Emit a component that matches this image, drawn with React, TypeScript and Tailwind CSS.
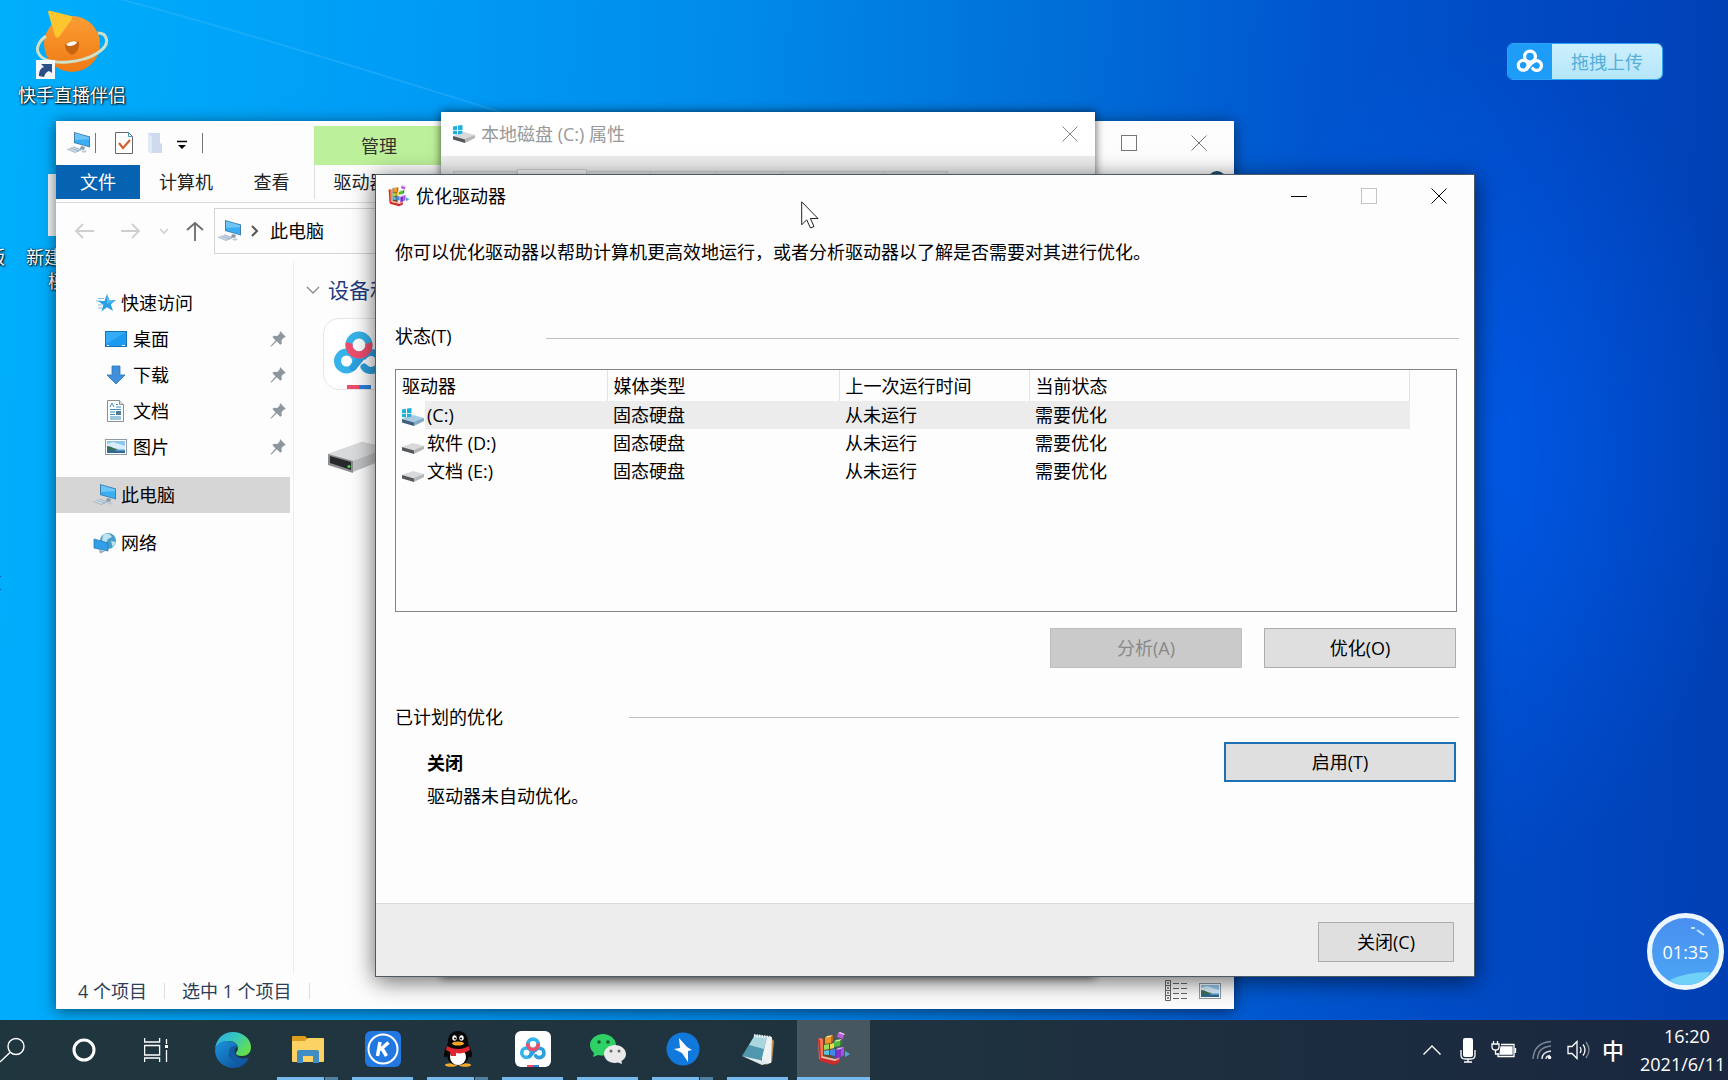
import React from "react";

type IconProps = { className?: string };

/* ---------- window and system icons ---------- */

const CloseGlyph = ({ className = "" }: IconProps) => (
  <svg viewBox="0 0 16 16" className={`size-4 ${className}`} fill="none" stroke="currentColor" strokeWidth="1">
    <path d="M.5.5l15 15M15.5.5l-15 15" />
  </svg>
);
const MaxGlyph = ({ className = "" }: IconProps) => (
  <svg viewBox="0 0 16 16" className={`size-4 ${className}`} fill="none" stroke="currentColor" strokeWidth="1">
    <rect x=".5" y=".5" width="15" height="15" />
  </svg>
);
const MinGlyph = () => (
  <svg viewBox="0 0 16 16" className="size-4" stroke="currentColor" strokeWidth="1">
    <path d="M0 8.5h16" />
  </svg>
);

const Computer = ({ className = "" }: IconProps) => (
  <svg viewBox="0 0 24 22" className={`h-[22px] w-6 shrink-0 ${className}`}>
    <path d="M7 0l16 4.500v11L7 11z" fill="#3f7fae" />
    <path d="M8 1.200l14 4v9.200L8 10.200z" fill="#39aef3" />
    <path d="M8 1.200l14 4v2L8 8z" fill="#6cc4f7" />
    <path d="M14 14l4 1-1 3-4-1z" fill="#8b9bab" />
    <path d="M0 17l7-2.500 8 3-7 3z" fill="#cfdbe6" />
    <path d="M0 17l8 3.500 7-3M3 16l9 3M6 14.800l8 3" stroke="#8fa6ba" strokeWidth=".7" fill="none" />
    <ellipse cx="17" cy="19.500" rx="2.500" ry="1" fill="#b9c6d2" />
  </svg>
);

const Drive = ({ className = "" }: IconProps) => (
  <svg viewBox="0 0 48 34" className={className}>
    <path d="M1 13L35 1l26 6v10L26 31z" fill="#bfc1c3" />
    <path d="M1 13L35 1l26 6-35 13z" fill="#d9dadb" />
    <path d="M1 13l25 7v12L1 24z" fill="#8b8e90" />
    <path d="M3 15l21 6v8L3 22z" fill="#27292b" />
    <circle cx="22" cy="25.500" r="1.600" fill="#4fd04f" />
  </svg>
);

const SmallDrive = ({ windows = false, tint = false }: { windows?: boolean; tint?: boolean }) => (
  <svg viewBox="0 0 22 20" className="h-5 w-[22px] shrink-0">
    <path d="M0 12l11-4 11 3-9 5z" fill={tint ? "#a9cbe2" : "#d8d9da"} />
    <path d="M22 11v3l-10 5v-4z" fill={tint ? "#7fa9c6" : "#b4b6b8"} />
    <path d="M0 12l12 3.500V19L0 15.500z" fill={tint ? "#3f617b" : "#55585a"} />
    {windows && (
      <g fill="#1fb0dc">
        <path d="M0 2.500l4-.7v4.400H0zM5 1.600L9.500 1v5.200H5zM0 7h4v3.600L0 10zM5 7h4.500v2.500L5 10.500z" />
      </g>
    )}
  </svg>
);

const Defrag = ({ className = "" }: IconProps) => (
  <svg viewBox="0 0 34 34" className={className}>
    <path d="M7 5l8-2v24l-8-1z" fill="#6b4a1e" />
    <path d="M1 7l2-1 3 1v17l-1 4-3-1z" fill="#f07a5a" />
    <path d="M1 7l2 1 1 18 14 3 5-3v4l-6 3L3 29z" fill="#cf2a2c" />
    <path d="M5 24l13 3 5-2-1 2-4 2L5 26z" fill="#f7b9a6" />
    <path d="M8 6l6-1v6l-6 1z" fill="#f0962c" />
    <path d="M8 6l2-2 6-1-2 2z" fill="#ffe08a" />
    <path d="M14 5l2-2v6l-2 2z" fill="#b96a12" />
    <path d="M7 13l5-1v5l-5 1z" fill="#9bdc58" />
    <path d="M13 12l4-1v5l-4 1z" fill="#f2d64a" />
    <path d="M17 10l6-1v5l-6 1z" fill="#55bb3e" />
    <path d="M17 10l2-2 6-1-2 2z" fill="#c6f296" />
    <path d="M23 9l2-2v5l-2 2z" fill="#2f8a2a" />
    <path d="M7 19l5-1v5l-5-.500z" fill="#56c4e6" />
    <path d="M13 18l5-1v7l-5-1z" fill="#3f8be8" />
    <path d="M19 18l5-1v8l-5 2z" fill="#7c34c8" />
    <path d="M19 18l2-2 6-1-3 2z" fill="#e0b6f8" />
    <path d="M24 17l3-2v8l-3 2z" fill="#a552dd" />
    <path d="M21 1l6 2-1 4-6-2z" fill="#b95ad6" />
    <path d="M21 1l2-1 5 2-1 1z" fill="#f2c8fa" />
    <path d="M28 19l5 3-3 2-2 1z" fill="#4aa6dd" />
  </svg>
);

const Baidu = ({ className = "", mono = false }: IconProps & { mono?: boolean }) => (
  <svg viewBox="0 0 50 46" className={className} fill="none" strokeWidth={mono ? 6 : 7}>
    <circle cx="12.500" cy="30" r="9" stroke={mono ? "#fff" : "#35b3ea"} />
    <path
      d="M19 36.500L31 22M30 36a9 9 0 1 0 0-11"
      stroke={mono ? "#fff" : "#2c9fdd"}
      strokeLinecap="round"
    />
    <circle cx="25" cy="14" r="10" stroke={mono ? "#fff" : "#35b3ea"} />
    {!mono && <path d="M15.200 12a10 10 0 1 0 19.600 0" stroke="#ee4d6c" />}
  </svg>
);

const Star = () => (
  <svg viewBox="0 0 22 20" className="h-5 w-[22px] shrink-0">
    <path d="M12 1l2.300 6H21l-5.200 4.200L18 18l-6-3.800L6.500 18.500 8.300 12 3 8h6.500z" fill="#2b9fe6" />
    <path d="M12 1l2.300 6H21l-9 4z" fill="#5bbcf2" />
    <path d="M3 5.500h6M1 8h5M3 12h4M3 15h4" stroke="#5aaee0" strokeWidth=".8" />
  </svg>
);
const Desktop = () => (
  <svg viewBox="0 0 22 18" className="h-[18px] w-[22px] shrink-0">
    <rect x=".5" y="1.500" width="21" height="15" fill="#1d9bf0" stroke="#1672b5" />
    <path d="M1 2h20L1 14z" fill="#36abf6" />
    <path d="M2 15.500h2M17 15.500h3" stroke="#fff" />
  </svg>
);
const Download = () => (
  <svg viewBox="0 0 22 20" className="h-5 w-[22px] shrink-0">
    <path d="M7 1h8v9h5l-9 9-9-9h5z" fill="#3f8fdc" stroke="#2e73b8" strokeWidth=".8" />
  </svg>
);
const Doc = () => (
  <svg viewBox="0 0 22 22" className="size-[22px] shrink-0">
    <path d="M2.500.5h12l4 4v17h-16z" fill="#fff" stroke="#8a8f94" />
    <path d="M14.500.5v4h4" fill="#dfe3e6" stroke="#8a8f94" />
    <path d="M5 7l2-4 2 4M11 4.500h2M11 7h5M5 9.500h11M5 12h5M5 14.500h5M5 17h11M5 19h11" stroke="#3b8fb8" fill="none" />
    <rect x="11" y="11" width="5" height="4" fill="#4e7f9c" />
  </svg>
);
const Picture = ({ className = "" }: IconProps) => (
  <svg viewBox="0 0 22 16" className={`h-4 w-[22px] shrink-0 ${className}`}>
    <rect x=".5" y=".5" width="21" height="15" fill="#fff" stroke="#8f9aa3" />
    <rect x="2" y="2" width="18" height="12" fill="#8cc6ee" />
    <path d="M2 5l6-2 12 4v3H2z" fill="#d9eefa" />
    <path d="M2 7c5 0 6 3 11 3l-3 2H2z" fill="#3e6f5c" />
    <path d="M2 11.500h18V14H2z" fill="#2f6a94" />
  </svg>
);
const Pin = () => (
  <svg viewBox="0 0 16 16" className="size-4" fill="#8d979f">
    <path d="M10 0l6 6-2 .500-2.500 2.500.3 3.500-1.500 1.300-3.600-3.600L1.500 15.500l-1-.500 5-5.400L2.400 6l1.500-1.300 3.400.3L9.700 2.500z" />
  </svg>
);
const Network = () => (
  <svg viewBox="0 0 24 22" className="h-[22px] w-6 shrink-0">
    <circle cx="15" cy="9" r="8" fill="#4a9fc8" />
    <path d="M10 3c4-3 7-1 9 2l-4 2-2 4-4-2zM18 9l5 1-3 6z" fill="#bfe2ef" />
    <path d="M1 7l14 4v8L1 16z" fill="#2f9fe9" stroke="#2878b4" strokeWidth=".8" />
    <path d="M6 18l6 1.500-5 2z" fill="#92a8ba" />
  </svg>
);

/* ---------- taskbar icons ---------- */

const Edge = () => (
  <svg viewBox="0 0 36 36" className="size-9">
    <defs>
      <linearGradient id="edge-top" x1="0" y1="0" x2="1" y2=".6">
        <stop offset="0" stopColor="#2fa9e0" />
        <stop offset=".5" stopColor="#35c6c0" />
        <stop offset="1" stopColor="#63e04e" />
      </linearGradient>
      <linearGradient id="edge-low" x1="0" y1="0" x2="1" y2="1">
        <stop offset="0" stopColor="#1b94dc" />
        <stop offset="1" stopColor="#0c4a94" />
      </linearGradient>
    </defs>
    <path d="M0 17C1 7 8 0 18 0c10 0 18 7 18 15 0 6-4 9-9 9-4 0-6-1-6-3 0-1 2-2 2-5 0-4-4-7-9-7C7 9 1 13 0 17z" fill="url(#edge-top)" />
    <path d="M0 18C1 12 6 9 12 9c7 0 11 3 11 7-3-3-9-1-9 5 0 6 6 10 12 9 3 0 5-1 7-2-3 5-8 8-14 8C8 36 0 28 0 18z" fill="url(#edge-low)" />
    <path d="M14 20c0-4 4-7 8-5-4 2-3 9 3 11 4 1 8 0 9-1-2 5-7 7-11 6-5-1-9-5-9-11z" fill="#135ca5" />
  </svg>
);
const Folder = () => (
  <svg viewBox="0 0 36 32" className="h-8 w-9">
    <path d="M2 4q0-1 1-1h12l3 3h15v6H2z" fill="#dc9e1c" />
    <path d="M2 8h13l3-3h15q1 0 1 1v22q0 1-1 1H3q-1 0-1-1z" fill="#fcd265" />
    <path d="M7 30V19q0-2 2-2h18q2 0 2 2v11h-6v-7H13v7z" fill="#3f8dc4" />
  </svg>
);
const KApp = () => (
  <svg viewBox="0 0 36 36" className="size-9">
    <rect width="36" height="36" rx="6" fill="#2377e0" />
    <circle cx="18" cy="18" r="14.500" fill="none" stroke="#fff" strokeWidth="2" />
    <path d="M15 11l-2.500 14M23.500 11.500L15 19M17 17.500l4.500 7.500" stroke="#fff" strokeWidth="3.500" fill="none" />
  </svg>
);
const QQ = () => (
  <svg viewBox="0 0 32 36" className="h-9 w-8">
    <ellipse cx="9" cy="34" rx="6" ry="1.800" fill="#f3a92a" />
    <ellipse cx="23" cy="34" rx="6" ry="1.800" fill="#f3a92a" />
    <path d="M16 0c7 0 10 5 10 11 0 3 4 8 4 13 0 3-2 3-3 1-1 6-5 9-11 9S6 31 5 25c-1 2-3 2-3-1 0-5 4-10 4-13C6 5 9 0 16 0z" fill="#070707" />
    <ellipse cx="16" cy="26" rx="8" ry="8" fill="#fff" />
    <ellipse cx="12.500" cy="7" rx="2.200" ry="2.800" fill="#fff" />
    <ellipse cx="19.500" cy="7" rx="2.200" ry="2.800" fill="#fff" />
    <circle cx="13" cy="7.500" r="1" />
    <circle cx="19" cy="7.500" r="1" />
    <ellipse cx="16" cy="12.500" rx="6" ry="2" fill="#f5a623" />
    <path d="M5 15c7 4 15 4 22 0l1 4c-5 3-10 4-14 3v3H9l-1-4-4-2z" fill="#e0262e" />
  </svg>
);
const WeChat = () => (
  <svg viewBox="0 0 36 32" className="h-8 w-9">
    <path d="M13 1C6 1 0 6 0 12c0 3 1.500 6 4 8l-1 4 5-2c9 2 18-2 18-10C26 6 20 1 13 1z" fill="#2fd165" />
    <ellipse cx="9" cy="9" rx="1.800" ry="1.800" fill="#155c2c" />
    <ellipse cx="18" cy="9" rx="1.800" ry="1.800" fill="#155c2c" />
    <path d="M25 12c-6 0-11 4-11 9s5 9 11 9l3-.500 4 1.500-.500-3c3-2 4.500-4 4.500-7 0-5-5-9-11-9z" fill="#e9e9e9" />
    <circle cx="21" cy="18" r="1.500" fill="#666" />
    <circle cx="29" cy="18" r="1.500" fill="#666" />
  </svg>
);
const Bolt = () => (
  <svg viewBox="0 0 34 34" className="size-[34px]">
    <circle cx="17" cy="17" r="16.500" fill="#1178dc" />
    <path d="M13 6l8 9 5 3-4 1v11l-6-9-8-4 6-1z" fill="#fff" />
  </svg>
);
const Notepad = () => (
  <svg viewBox="0 0 34 34" className="size-[34px]">
    <path d="M29 5l4 4-2 21-6 3z" fill="#b88f55" />
    <path d="M14 3l17 2-1 26-8 1z" fill="#eef2f3" />
    <path d="M14 3l12 2-6 25L1 24z" fill="#4f97ac" />
    <path d="M14 3l12 2-3 12L8 13z" fill="#a9d6df" />
    <path d="M1 24l18 4 10 3-8 2z" fill="#dfe8ea" />
    <path d="M13 3.500l17 2" stroke="#e9eef0" strokeWidth="3" strokeDasharray="1.500 1" />
  </svg>
);

const taskbarApps: { name: string; icon: React.ReactNode; bar: string; extra?: boolean }[] = [
  { name: "文件资源管理器", icon: <Folder />, bar: "w-[47px]", extra: true },
  { name: "K", icon: <KApp />, bar: "w-[61px]" },
  { name: "QQ", icon: <QQ />, bar: "w-[47px]", extra: true },
  {
    name: "百度网盘",
    icon: (
      <span className="flex size-9 flex-col items-center justify-between overflow-hidden rounded-md bg-white pt-[6px]">
        <Baidu className="h-6 w-7" />
        <span className="flex h-[2px] w-3 bg-linear-to-r from-[#ee4d6c] from-50% to-[#2c80dd] to-50%" />
      </span>
    ),
    bar: "w-[61px]",
  },
  { name: "微信", icon: <WeChat />, bar: "w-[61px]" },
  { name: "迅雷", icon: <Bolt />, bar: "w-[47px]", extra: true },
  { name: "记事本", icon: <Notepad />, bar: "w-[61px]" },
];

function Taskbar() {
  return (
    <footer className="absolute inset-x-0 bottom-0 flex h-[60px] items-stretch justify-between overflow-hidden bg-linear-to-r from-[#20363e] via-[#1f333f] to-[#1a273f] text-white">
      <div className="flex">
        <button aria-label="搜索" className="flex w-12 items-center">
          <svg viewBox="0 0 26 26" className="size-[26px]" fill="none" stroke="#fff" strokeWidth="1.400">
            <circle cx="16" cy="9.500" r="8" />
            <path d="M10 15.500L0 25" />
          </svg>
        </button>
        <button aria-label="Cortana" className="flex w-[72px] items-center justify-center">
          <svg viewBox="0 0 24 24" className="size-6" fill="none" stroke="#fff" strokeWidth="3">
            <circle cx="12" cy="12" r="10" />
          </svg>
        </button>
        <button aria-label="任务视图" className="flex w-[72px] items-center justify-center">
          <svg viewBox="0 0 24 24" className="size-6" fill="none" stroke="#fff" strokeWidth="1.300">
            <path d="M.6 0v4h15V0M.6 24v-4h15v4M.6 7.500h15v9.500H.6zM22.500 1v5M22.500 12v12" />
            <rect x="21" y="7" width="3" height="3" fill="#fff" stroke="none" />
          </svg>
        </button>
        <button aria-label="Microsoft Edge" className="flex w-[78px] items-center justify-center pl-1">
          <Edge />
        </button>
        {taskbarApps.map((a) => (
          <button key={a.name} aria-label={a.name} className="flex w-[75px] flex-col items-center">
            <span className="flex w-full grow items-center justify-center">{a.icon}</span>
            <span className="flex h-[3px] w-[61px]">
              <span className={`bg-[#76b9ed] ${a.bar}`} />
              {a.extra && <span className="ml-px grow bg-[#50809f]" />}
            </span>
          </button>
        ))}
        <button aria-label="优化驱动器" className="ml-0.5 flex w-[73px] items-center justify-center border-b-3 border-[#76b9ed] bg-[#47575f]">
          <Defrag className="size-[34px]" />
        </button>
      </div>

      <div className="flex shrink-0 items-center">
        <div className="flex items-center gap-[15px] pr-4">
          <svg viewBox="0 0 18 10" className="h-[10px] w-[18px]" fill="none" stroke="#fff" strokeWidth="1.400">
            <path d="M.5 9.500L9 1l8.500 8.500" />
          </svg>
          <svg viewBox="0 0 16 26" className="ml-1 h-[26px] w-4">
            <rect x="3" y="1" width="10" height="19" rx="2" fill="#fff" />
            <path d="M1 13v5q0 4 4 4h6q4 0 4-4v-5M8 22v3M4 25h8" stroke="#fff" fill="none" strokeWidth="1.300" />
          </svg>
          <svg viewBox="0 0 26 20" className="h-5 w-[26px]" fill="none" stroke="#fff" strokeWidth="1.300">
            <path d="M10 4.500h13v12H7v-3M24.500 8v5" />
            <path d="M10 7h11v7H9z" fill="#fff" />
            <path d="M1 4h7v3q0 3-3.500 3T1 7zM2.500 1v3M6.500 1v3M4.500 10v4H8" />
          </svg>
          <svg viewBox="0 0 20 20" className="size-5" fill="none" strokeWidth="1.400">
            <g stroke="#7d8998">
              <path d="M1 19Q2 3 19 1.500" />
              <path d="M5.500 19Q6 7 19 6" />
            </g>
            <path d="M10 19q0-7 9-8M14 19q0-3 4-3.500" stroke="#dfe4ea" />
            <circle cx="17.500" cy="17.500" r="1.800" fill="#fff" />
          </svg>
          <svg viewBox="0 0 24 20" className="h-5 w-6" fill="none" stroke="#fff" strokeWidth="1.300">
            <path d="M1 6.500h4l5-5v17l-5-5H1zM13 7q2 3 0 6M16 4.500q4 5.500 0 11" />
            <path d="M19 2q6 8 0 16" stroke="#7d8998" />
          </svg>
          <span className="-ml-1 text-[22px] leading-7 font-medium">中</span>
        </div>
        <div className="flex w-[88px] flex-col text-lg leading-7 whitespace-nowrap">
          <span className="pl-6">16:20</span>
          <span>2021/6/11</span>
        </div>
      </div>
    </footer>
  );
}

/* ---------- explorer window ---------- */

const quickAccess = [
  { name: "桌面", icon: <Desktop /> },
  { name: "下载", icon: <Download /> },
  { name: "文档", icon: <Doc /> },
  { name: "图片", icon: <Picture /> },
];

function Explorer() {
  return (
    <section className="absolute top-[121px] left-[56px] flex h-[888px] w-[1178px] flex-col bg-[#fdfdfd] text-[#222] shadow-[0_2px_14px_rgba(0,0,0,0.55)]">
      <header className="flex h-11 items-center pl-[11px]">
        <Computer />
        <span className="ml-1 h-5 w-px bg-[#777]" />
        <button aria-label="属性" className="ml-[19px]">
          <svg viewBox="0 0 18 22" className="h-[22px] w-[18px]">
            <path d="M.5.5h13l4 4v17H.5z" fill="#fff" stroke="#666" />
            <path d="M13.500.5v4h4" fill="none" stroke="#4b9ac4" />
            <path d="M4 11l4 5 7-8" fill="none" stroke="#d2622f" strokeWidth="2.200" />
          </svg>
        </button>
        <button aria-label="新建文件夹" className="ml-[14px]">
          <svg viewBox="0 0 16 22" className="h-[22px] w-4">
            <path d="M1 1h12v10l2 1v9H5l-4-1z" fill="#cfdaee" />
            <path d="M1 1l4 4v17l-4-2z" fill="#e2e9f6" />
          </svg>
        </button>
        <button aria-label="自定义快速访问工具栏" className="mt-1 ml-[14px]">
          <svg viewBox="0 0 10 10" className="size-[10px]">
            <path d="M0 1.500h10" stroke="#000" strokeWidth="1.500" />
            <path d="M1 5h8L5 9z" />
          </svg>
        </button>
        <span className="ml-[15px] h-5 w-px bg-[#777]" />
        <div className="mt-[5px] ml-[111px] flex h-[39px] w-[130px] items-center justify-center bg-[#bdf09a] text-lg text-[#333]">
          管理
        </div>
        <div className="ml-auto flex text-[#777]">
          <button aria-label="最大化" className="flex h-11 w-[70px] items-center justify-center">
            <MaxGlyph />
          </button>
          <button aria-label="关闭窗口" className="flex h-11 w-[70px] items-center justify-center">
            <CloseGlyph />
          </button>
        </div>
      </header>
      <nav className="flex h-[38px] items-start border-b border-[#dcdcdc] text-lg">
        <button className="h-[34px] w-[84px] bg-[#0563b1] text-white">文件</button>
        <button className="h-[34px] w-[92px]">计算机</button>
        <button className="h-[34px] w-[78px] pl-px">查看</button>
        <button className="ml-1 h-[34px] w-[128px] border-l border-[#ddd]">驱动器工具</button>
        <span className="mt-[6px] mr-2 ml-auto size-[18px] rounded-full bg-[#1d4f72]" />
      </nav>
      <div className="flex h-[59px] shrink-0 items-center pb-1 pl-[18px]">
        <svg viewBox="0 0 22 18" className="h-[18px] w-[22px]" fill="none" stroke="#cfcfcf" strokeWidth="1.800">
          <path d="M20 9H2M9 2L2 9l7 7" />
        </svg>
        <svg viewBox="0 0 22 18" className="ml-[23px] h-[18px] w-[22px]" fill="none" stroke="#cfcfcf" strokeWidth="1.800">
          <path d="M2 9h18M13 2l7 7-7 7" />
        </svg>
        <svg viewBox="0 0 10 8" className="ml-[18px] h-2 w-[10px]" fill="none" stroke="#cfcfcf" strokeWidth="1.600">
          <path d="M1 2l4 4 4-4" />
        </svg>
        <svg viewBox="0 0 18 20" className="ml-[17px] h-5 w-[18px]" fill="none" stroke="#6b6b6b" strokeWidth="1.800">
          <path d="M9 20V2M1 9l8-7 8 7" />
        </svg>
        <div className="ml-[10px] flex h-[46px] grow items-center border border-[#d5d5d5] pl-[3px] text-lg text-black">
          <Computer />
          <svg viewBox="0 0 8 12" className="mr-[11px] ml-[9px] h-3 w-2" fill="none" stroke="#555" strokeWidth="2">
            <path d="M1 1l5 5-5 5" />
          </svg>
          此电脑
        </div>
      </div>
      <div className="flex grow text-lg text-black">
        <aside className="flex w-[238px] flex-col border-r border-[#ededed] pt-[23px]">
          <div className="flex h-9 items-center gap-1 pl-[39px]">
            <Star />
            快速访问
          </div>
          {quickAccess.map((q) => (
            <div key={q.name} className="flex h-9 items-center gap-[6px] pr-[7px] pl-[49px]">
              {q.icon}
              <span className="grow">{q.name}</span>
              <Pin />
            </div>
          ))}
          <div className="mt-3 mr-[3px] flex h-9 items-center gap-1 bg-[#d6d6d6] pl-[37px]">
            <Computer />
            此电脑
          </div>
          <div className="mt-3 flex h-9 items-center gap-1 pl-[37px]">
            <Network />
            网络
          </div>
        </aside>
        <div className="flex flex-col pl-3">
          <h2 className="mt-[14px] flex h-7 items-center gap-2 text-[21px] text-[#1f3a7d]">
            <svg viewBox="0 0 14 8" className="h-2 w-[14px]" fill="none" stroke="#888" strokeWidth="1.300">
              <path d="M1 1l6 6 6-6" />
            </svg>
            设备和驱动器
          </h2>
          <div className="mt-[14px] ml-[17px] flex size-[72px] flex-col items-center justify-between rounded-2xl border border-[#e6e6e6] bg-white pt-3">
            <Baidu className="h-[46px] w-[54px]" />
            <span className="h-1 w-6 bg-linear-to-r from-[#ee4d6c] from-50% to-[#2c80dd] to-50%" />
          </div>
          <Drive className="mt-[51px] ml-[21px] h-[34px] w-12" />
        </div>
      </div>
      <div className="flex h-[35px] shrink-0 items-center pb-0.5 pl-[22px] text-lg text-[#2c3e55]">
        4 个项目
        <span className="mx-[17px] h-4 w-px bg-[#ddd]" />
        选中 1 个项目
        <span className="ml-[17px] h-4 w-px bg-[#ddd]" />
        <button aria-label="详细信息" className="mr-3 ml-auto">
          <svg viewBox="0 0 22 22" className="size-[22px]" fill="none" stroke="#666" strokeWidth="1">
            <path d="M.5.5h5v20h-5zM.5 5.500h5M.5 10.500h5M.5 15.500h5M8 3.500h6M16 3.500h6M8 8.500h6M16 8.500h6M8 13.500h6M16 13.500h6M8 18.500h6M16 18.500h6" />
            <path d="M2 3h2M2 8h2M2 13h2M2 18h2" stroke="#222" />
          </svg>
        </button>
        <button aria-label="大图标" className="mr-[13px]">
          <Picture />
        </button>
      </div>
    </section>
  );
}

/* ---------- disk properties window ---------- */

function DiskProperties() {
  return (
    <section className="absolute top-[112px] left-[441px] h-[865px] w-[654px] bg-[#ededed] shadow-[0_0_9px_rgba(0,0,0,0.65)]">
      <header className="flex h-11 items-center bg-white pl-3 text-lg text-[#999]">
        <SmallDrive windows />
        <h2 className="ml-[6px]">本地磁盘 (C:) 属性</h2>
        <button aria-label="关闭属性" className="ml-auto flex h-11 w-[50px] items-center justify-center text-[#888]">
          <CloseGlyph />
        </button>
      </header>
      <div className="mt-[13px] ml-3 flex h-6 items-end">
        <span className="h-[22px] w-16 border border-[#d0d0d0] bg-[#e6e6e6]" />
        <span className="h-6 w-[70px] border border-[#cfcfcf] bg-[#f7f7f7]" />
        <span className="h-[22px] w-16 border border-l-0 border-[#d0d0d0] bg-[#e6e6e6]" />
        <span className="h-[22px] w-[66px] border border-l-0 border-[#d0d0d0] bg-[#e6e6e6]" />
        <span className="h-[22px] w-[66px] border border-l-0 border-[#d0d0d0] bg-[#e6e6e6]" />
        <span className="h-[22px] w-[101px] border border-l-0 border-[#d0d0d0] bg-[#e6e6e6]" />
        <span className="h-[22px] w-16 border border-l-0 border-[#d0d0d0] bg-[#e6e6e6]" />
      </div>
    </section>
  );
}

/* ---------- optimize drives dialog ---------- */

const drives = [
  { name: "(C:)", system: true },
  { name: "软件 (D:)", system: false },
  { name: "文档 (E:)", system: false },
];

function OptimizeDialog() {
  return (
    <section className="absolute top-[174px] left-[375px] flex h-[803px] w-[1100px] flex-col border border-[#4d5a66] bg-[#fdfdfd] text-lg leading-6 text-black shadow-[0_4px_22px_rgba(0,0,0,0.6)]">
      <header className="flex h-[46px] shrink-0 items-center pb-1 pl-3">
        <Defrag className="size-[22px]" />
        <h1 className="ml-[6px]">优化驱动器</h1>
        <div className="ml-auto flex">
          <button aria-label="最小化" className="flex h-10 w-[70px] items-center justify-center">
            <MinGlyph />
          </button>
          <button aria-label="最大化对话框" disabled className="flex h-10 w-[70px] items-center justify-center text-[#c4c4c4]">
            <MaxGlyph />
          </button>
          <button aria-label="关闭对话框" className="flex h-10 w-[70px] items-center justify-center">
            <CloseGlyph />
          </button>
        </div>
      </header>

      <div className="flex grow flex-col pt-[19px] pr-[17px] pl-[19px]">
        <p>你可以优化驱动器以帮助计算机更高效地运行，或者分析驱动器以了解是否需要对其进行优化。</p>

        <div className="-mr-[2px] mt-[60px] flex items-center">
          <h2 className="w-[151px]">状态(T)</h2>
          <span className="mt-1 h-px grow bg-[#c0c0c0]" />
        </div>
        <div className="mt-[21px] h-[243px] border border-[#7f838a]">
          <table className="w-[1014px] table-fixed border-collapse text-left">
            <colgroup>
              <col className="w-[29px]" />
              <col className="w-[182px]" />
              <col className="w-[232px]" />
              <col className="w-[190px]" />
              <col />
            </colgroup>
            <thead>
              <tr className="h-[31px]">
                <th colSpan={2} className="border-r border-[#e3e3e3] p-0 pl-[6px] font-normal">驱动器</th>
                <th className="border-r border-[#e3e3e3] p-0 pl-[6px] font-normal">媒体类型</th>
                <th className="border-r border-[#e3e3e3] p-0 pl-[6px] font-normal">上一次运行时间</th>
                <th className="border-r border-[#e3e3e3] p-0 pl-[6px] font-normal">当前状态</th>
              </tr>
            </thead>
            <tbody>
              {drives.map((d) => (
                <tr key={d.name} className="h-7">
                  <td className="p-0 pt-[3px] pl-[6px]">
                    <SmallDrive windows={d.system} tint={d.system} />
                  </td>
                  <td className={`p-0 pl-[2px] ${d.system ? "bg-[#ececec]" : ""}`}>{d.name}</td>
                  <td className={`p-0 pl-[6px] ${d.system ? "bg-[#ececec]" : ""}`}>固态硬盘</td>
                  <td className={`p-0 pl-[6px] ${d.system ? "bg-[#ececec]" : ""}`}>从未运行</td>
                  <td className={`p-0 pl-[6px] ${d.system ? "bg-[#ececec]" : ""}`}>需要优化</td>
                </tr>
              ))}
            </tbody>
          </table>
        </div>
        <div className="mt-4 flex justify-end gap-[22px] pr-px">
          <button disabled className="h-10 w-48 border border-[#bfbfbf] bg-[#cacaca] text-[#888]">
            分析(A)
          </button>
          <button className="h-10 w-48 border border-[#adadad] bg-[#dfdfdf]">优化(O)</button>
        </div>

        <div className="-mr-[2px] mt-[37px] flex items-center">
          <h2 className="w-[234px]">已计划的优化</h2>
          <span className="h-px grow bg-[#c0c0c0]" />
        </div>
        <div className="mt-[13px] flex items-start justify-between pr-px pl-8">
          <div className="flex flex-col gap-[9px] pt-[9px]">
            <strong className="font-bold">关闭</strong>
            <p>驱动器未自动优化。</p>
          </div>
          <button className="h-10 w-[232px] border-2 border-[#1c70b4] bg-[#dfdfdf]">启用(T)</button>
        </div>
      </div>

      <footer className="flex h-[73px] shrink-0 items-center justify-end border-t border-[#dadada] bg-[#ededed] pt-1 pr-5">
        <button className="h-10 w-[136px] border border-[#adadad] bg-[#dfdfdf]">关闭(C)</button>
      </footer>
    </section>
  );
}

/* ---------- desktop ---------- */

export default function App() {
  return (
    <main className="relative h-screen w-full overflow-hidden bg-[radial-gradient(ellipse_260px_420px_at_86%_42%,rgba(0,100,255,0.55),transparent),linear-gradient(92deg,#00affc_0%,#009df6_22%,#008aea_42%,#006fd8_60%,#0055cf_75%,#0048c2_88%,#003fb3_100%)] font-['Open_Sans','Noto_Sans_CJK_SC',sans-serif]">
      <svg viewBox="0 0 440 120" className="absolute top-0 left-[100px] h-[120px] w-[440px]" fill="none">
        <path d="M8-4Q160 36 400 112" stroke="#4fbcff" strokeOpacity=".3" strokeWidth="2" />
      </svg>

      <div className="absolute top-[10px] left-2 flex w-[128px] flex-col items-center text-lg leading-6 text-white [text-shadow:1px_1px_2px_#000,0_0_2px_#000]">
        <svg viewBox="0 0 76 70" className="h-[70px] w-[76px]">
          <defs>
            <linearGradient id="planet" x1="0" y1="0" x2="0" y2="1">
              <stop offset="0" stopColor="#fb9d33" />
              <stop offset="1" stopColor="#ef7a14" />
            </linearGradient>
          </defs>
          <circle cx="38" cy="34" r="28" fill="url(#planet)" />
          <path d="M14 2q0-2 3-1l20 5q2 1 1 3L25 27q-2 2-4-1z" fill="#fdc62f" />
          <path d="M12 26C-4 38 2 54 34 52c24-2 42-14 38-24-1-4-5-5-8-5" fill="none" stroke="#cfe0c8" strokeWidth="3" />
          <path d="M31 34q6-4 14-2 1 10-7 13-7-3-7-11z" fill="#c9640f" />
          <path d="M32 34q6-4 11-2-1 4-9 4z" fill="#fff" />
          <rect x="2" y="50" width="19" height="19" fill="#f4f7fb" />
          <path d="M5 66c0-6 2-8 5-9l-3-3h11v9l-3-2c-3 1-4 3-5 6z" fill="#2b4f86" />
        </svg>
        <span className="mt-[3px]">快手直播伴侣</span>
      </div>
      <div className="absolute top-[174px] left-[26px] flex w-[72px] flex-col items-center text-lg leading-6 text-white [text-shadow:1px_1px_2px_#000,0_0_2px_#000]">
        <span className="h-[62px] w-7 bg-[#f3f6f8]" />
        <span className="mt-[9px]">新建文本</span>
        <span className="pl-2">模板</span>
      </div>
      <span className="absolute top-[245px] -left-[13px] text-lg leading-6 text-white [text-shadow:1px_1px_2px_#000,0_0_2px_#000]">版</span>
      <span className="absolute top-[570px] -left-4 text-lg leading-6 text-[#0b4f86]">道</span>

      <Explorer />
      <DiskProperties />
      <OptimizeDialog />

      <svg viewBox="0 0 18 28" className="absolute top-[201px] left-[801px] h-7 w-[18px]">
        <path d="M.7.800v23l5-5 3.800 8.200 3.500-1.500-3.600-8H17z" fill="#fff" stroke="#222" />
      </svg>

      <button className="absolute top-[43px] right-[65px] flex h-[37px] overflow-hidden rounded-md border border-[#2fa4f5] text-lg">
        <span className="flex w-11 items-center justify-center bg-[#1e9df8]">
          <Baidu mono className="h-[25px] w-[30px]" />
        </span>
        <span className="flex h-full w-[110px] items-center justify-center bg-linear-to-b from-[#cdeffc] to-[#b4e6fa] text-[#55afd8]">
          拖拽上传
        </span>
      </button>

      <div className="absolute right-1 bottom-[90px] flex size-[77px] items-center justify-center overflow-hidden rounded-full border-[5px] border-[#ecf6ff] bg-linear-to-b from-[#4a8ff0] to-[#4ba6f4] text-lg text-white">
        <svg viewBox="0 0 67 67" className="absolute inset-0 size-[67px]">
          <path d="M18 62q16-8 40-8l-6 13H22z" fill="#6fd0f8" />
          <path d="M39 10h4M45 12l7 5" stroke="#bfe6ff" strokeWidth="2" />
        </svg>
        <span className="relative">01:35</span>
      </div>

      <Taskbar />
    </main>
  );
}
